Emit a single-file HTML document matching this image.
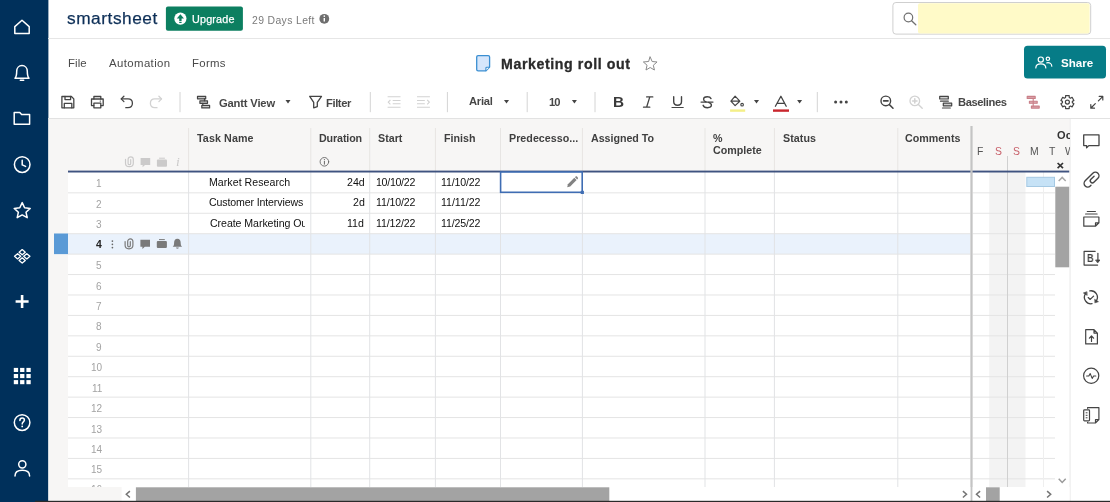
<!DOCTYPE html>
<html><head><meta charset="utf-8"><title>Marketing roll out - Smartsheet</title>
<style>
*{box-sizing:border-box;margin:0;padding:0}
html,body{width:1110px;height:502px;overflow:hidden;background:#fff;font-family:"Liberation Sans",sans-serif;}
.abs{position:absolute}
.t{position:absolute;white-space:nowrap;line-height:1;will-change:transform}
svg{position:absolute;left:0;top:0;overflow:visible}
</style></head><body>

<svg width="1110" height="502" viewBox="0 0 1110 502"><rect x="0.00" y="0.00" width="48.40" height="502.00" fill="#00305b"/><rect x="48.00" y="38.00" width="1062.00" height="1.00" fill="#e6e6e6"/><rect x="165.90" y="6.60" width="77.00" height="24.20" fill="#0c7f60" rx="2"/><rect x="892.90" y="2.50" width="197.80" height="31.60" fill="#fff" rx="3" stroke="#cfcfcf" stroke-width="1.0"/><rect x="918.00" y="3.20" width="171.60" height="30.20" fill="#fffac8" rx="2"/><rect x="1024.00" y="45.70" width="82.00" height="32.80" fill="#067c87" rx="3.5"/><rect x="48.00" y="118.00" width="1062.00" height="1.00" fill="#e2e2e2"/><rect x="48.40" y="119.00" width="1021.20" height="383.00" fill="#f7f6f5"/><rect x="68.00" y="172.00" width="902.40" height="315.00" fill="#fff"/><rect x="68.00" y="233.89" width="902.40" height="20.03" fill="#eaf2fc"/><rect x="54.00" y="233.49" width="14.00" height="20.63" fill="#5a9ad6"/><rect x="972.60" y="172.00" width="82.40" height="315.00" fill="#fff"/><rect x="989.20" y="172.00" width="36.30" height="315.00" fill="#f3f3f3"/><rect x="1055.00" y="172.00" width="14.50" height="315.00" fill="#fff"/><rect x="68.00" y="192.33" width="902.40" height="1.00" fill="#e4e4e4"/><rect x="972.60" y="192.33" width="82.40" height="1.00" fill="#e4e4e4"/><rect x="68.00" y="212.76" width="902.40" height="1.00" fill="#e4e4e4"/><rect x="972.60" y="212.76" width="82.40" height="1.00" fill="#e4e4e4"/><rect x="68.00" y="233.19" width="902.40" height="1.00" fill="#e4e4e4"/><rect x="972.60" y="233.19" width="82.40" height="1.00" fill="#e4e4e4"/><rect x="68.00" y="253.62" width="902.40" height="1.00" fill="#e4e4e4"/><rect x="972.60" y="253.62" width="82.40" height="1.00" fill="#e4e4e4"/><rect x="68.00" y="274.05" width="902.40" height="1.00" fill="#e4e4e4"/><rect x="972.60" y="274.05" width="82.40" height="1.00" fill="#e4e4e4"/><rect x="68.00" y="294.48" width="902.40" height="1.00" fill="#e4e4e4"/><rect x="972.60" y="294.48" width="82.40" height="1.00" fill="#e4e4e4"/><rect x="68.00" y="314.91" width="902.40" height="1.00" fill="#e4e4e4"/><rect x="972.60" y="314.91" width="82.40" height="1.00" fill="#e4e4e4"/><rect x="68.00" y="335.34" width="902.40" height="1.00" fill="#e4e4e4"/><rect x="972.60" y="335.34" width="82.40" height="1.00" fill="#e4e4e4"/><rect x="68.00" y="355.77" width="902.40" height="1.00" fill="#e4e4e4"/><rect x="972.60" y="355.77" width="82.40" height="1.00" fill="#e4e4e4"/><rect x="68.00" y="376.20" width="902.40" height="1.00" fill="#e4e4e4"/><rect x="972.60" y="376.20" width="82.40" height="1.00" fill="#e4e4e4"/><rect x="68.00" y="396.63" width="902.40" height="1.00" fill="#e4e4e4"/><rect x="972.60" y="396.63" width="82.40" height="1.00" fill="#e4e4e4"/><rect x="68.00" y="417.06" width="902.40" height="1.00" fill="#e4e4e4"/><rect x="972.60" y="417.06" width="82.40" height="1.00" fill="#e4e4e4"/><rect x="68.00" y="437.49" width="902.40" height="1.00" fill="#e4e4e4"/><rect x="972.60" y="437.49" width="82.40" height="1.00" fill="#e4e4e4"/><rect x="68.00" y="457.92" width="902.40" height="1.00" fill="#e4e4e4"/><rect x="972.60" y="457.92" width="82.40" height="1.00" fill="#e4e4e4"/><rect x="68.00" y="478.35" width="902.40" height="1.00" fill="#e4e4e4"/><rect x="972.60" y="478.35" width="82.40" height="1.00" fill="#e4e4e4"/><rect x="188.10" y="128.00" width="1.00" height="43.00" fill="#e7e5e3"/><rect x="188.10" y="172.00" width="1.00" height="315.00" fill="#e2e3e5"/><rect x="310.30" y="128.00" width="1.00" height="43.00" fill="#e7e5e3"/><rect x="310.30" y="172.00" width="1.00" height="315.00" fill="#e2e3e5"/><rect x="369.20" y="128.00" width="1.00" height="43.00" fill="#e7e5e3"/><rect x="369.20" y="172.00" width="1.00" height="315.00" fill="#e2e3e5"/><rect x="434.90" y="128.00" width="1.00" height="43.00" fill="#e7e5e3"/><rect x="434.90" y="172.00" width="1.00" height="315.00" fill="#e2e3e5"/><rect x="500.00" y="128.00" width="1.00" height="43.00" fill="#e7e5e3"/><rect x="500.00" y="172.00" width="1.00" height="315.00" fill="#e2e3e5"/><rect x="581.90" y="128.00" width="1.00" height="43.00" fill="#e7e5e3"/><rect x="581.90" y="172.00" width="1.00" height="315.00" fill="#e2e3e5"/><rect x="704.50" y="128.00" width="1.00" height="43.00" fill="#e7e5e3"/><rect x="704.50" y="172.00" width="1.00" height="315.00" fill="#e2e3e5"/><rect x="773.90" y="128.00" width="1.00" height="43.00" fill="#e7e5e3"/><rect x="773.90" y="172.00" width="1.00" height="315.00" fill="#e2e3e5"/><rect x="897.30" y="128.00" width="1.00" height="43.00" fill="#e7e5e3"/><rect x="897.30" y="172.00" width="1.00" height="315.00" fill="#e2e3e5"/><rect x="1007.00" y="156.00" width="1.00" height="331.00" fill="#d0d0d0"/><rect x="1043.00" y="172.00" width="1.00" height="315.00" fill="#efefef"/><rect x="68.00" y="170.60" width="1001.60" height="1.90" fill="#3f5380"/><rect x="500.60" y="172.00" width="81.60" height="20.30" fill="#fff" stroke="#3f6db3" stroke-width="1.6"/><rect x="580.70" y="190.80" width="3.20" height="3.20" fill="#3f6db3"/><rect x="1026.80" y="177.30" width="27.70" height="9.20" fill="#c6e2f6" stroke="#a5c9e3" stroke-width="1.0"/><rect x="970.40" y="126.00" width="2.20" height="376.00" fill="#c4c4c4"/><rect x="1055.30" y="186.70" width="14.20" height="80.60" fill="#a3a3a3"/><rect x="1069.60" y="119.00" width="40.40" height="383.00" fill="#fff"/><rect x="1069.60" y="119.00" width="1.0" height="383.00" fill="#e9e9e9"/><rect x="121.60" y="487.00" width="848.80" height="14.00" fill="#fff"/><rect x="972.60" y="487.00" width="97.00" height="14.00" fill="#fff"/><rect x="135.90" y="487.30" width="473.40" height="13.70" fill="#a3a3a3"/><rect x="986.00" y="487.30" width="13.70" height="13.70" fill="#a3a3a3"/><rect x="35.00" y="500.80" width="1075.00" height="1.20" fill="#2a2a2a"/></svg>
<svg class="abs" style="left:0;top:0" width="48" height="502" viewBox="0 0 48 502" fill="none" stroke="#fff" stroke-width="1.5" stroke-linejoin="round" stroke-linecap="round"><path d="M14.8 26.6 L22 20.2 L29.2 26.6 V33.6 H14.8 Z"/><path d="M15 78.2 H29 C27.4 76.6 27.3 75 27.3 71.3 C27.3 68 25 65.6 22 65.6 C19 65.6 16.700 68 16.700 71.300 C16.700 75 16.600 76.600 15 78.200 Z"/><path d="M20.300 80.300 H23.700"/><path d="M14.2 112.400 H19.800 L21.600 114.400 H29.600 V124.200 H14.200 Z"/><circle cx="22.2" cy="164.600" r="7.800"/><path d="M22.200 160.200 V164.900 L25.600 166.400"/><path d="M22.2 202.600 L24.600 207.800 L30.200 208.400 L26 212.200 L27.200 217.700 L22.200 214.900 L17.200 217.700 L18.400 212.200 L14.200 208.400 L19.800 207.800 Z"/><path stroke-width="1.3" d="M22.2 249.6 L25.3 252.2 L22.2 254.79999999999998 L19.099999999999998 252.2 Z"/><path stroke-width="1.3" d="M17.6 253.70000000000002 L20.700000000000003 256.3 L17.6 258.90000000000003 L14.500000000000002 256.3 Z"/><path stroke-width="1.3" d="M26.8 253.70000000000002 L29.900000000000002 256.3 L26.8 258.90000000000003 L23.7 256.3 Z"/><path stroke-width="1.3" d="M22.2 257.79999999999995 L25.3 260.4 L22.2 263.0 L19.099999999999998 260.4 Z"/><path stroke-width="2.6" stroke-linecap="butt" d="M22.100 295 V308 M15.600 301.500 H28.600"/><rect x="13.80" y="367.90" width="4.300" height="4.100" fill="#fff" stroke="none"/><rect x="20.10" y="367.90" width="4.300" height="4.100" fill="#fff" stroke="none"/><rect x="26.40" y="367.90" width="4.300" height="4.100" fill="#fff" stroke="none"/><rect x="13.80" y="374.00" width="4.300" height="4.100" fill="#fff" stroke="none"/><rect x="20.10" y="374.00" width="4.300" height="4.100" fill="#fff" stroke="none"/><rect x="26.40" y="374.00" width="4.300" height="4.100" fill="#fff" stroke="none"/><rect x="13.80" y="380.10" width="4.300" height="4.100" fill="#fff" stroke="none"/><rect x="20.10" y="380.10" width="4.300" height="4.100" fill="#fff" stroke="none"/><rect x="26.40" y="380.10" width="4.300" height="4.100" fill="#fff" stroke="none"/><circle cx="22.1" cy="422.600" r="7.800"/><path stroke-width="1.5" d="M19.900 420.400 C19.900 418.900 20.900 418.100 22.200 418.100 C23.500 418.100 24.400 418.900 24.400 420.100 C24.400 421.900 22.200 421.900 22.200 423.900"/><circle cx="22.200" cy="426.400" r="0.900" fill="#fff" stroke="none"/><circle cx="22.3" cy="464.300" r="3.600"/><path d="M15 476 C15 472.200 18 470.300 22.300 470.300 C26.600 470.300 29.600 472.200 29.600 476"/></svg>
<div class="t" style="left:67.40px;top:10.26px;font-size:17.3px;color:#0d2f57;letter-spacing:0.536px;-webkit-text-stroke:0.25px #0d2f57;">smartsheet</div>
<div class="t" style="left:191.80px;top:13.66px;font-size:10.8px;color:#fff;letter-spacing:0.178px;-webkit-text-stroke:0.25px #fff;">Upgrade</div>
<div class="t" style="left:251.80px;top:16.40px;font-size:10.4px;color:#7a7a7a;letter-spacing:0.374px;">29 Days Left</div>
<div class="t" style="left:68.40px;top:58.25px;font-size:11.4px;color:#4a4a4a;letter-spacing:0.077px;">File</div>
<div class="t" style="left:109.30px;top:58.25px;font-size:11.4px;color:#4a4a4a;letter-spacing:0.392px;">Automation</div>
<div class="t" style="left:191.90px;top:58.25px;font-size:11.4px;color:#4a4a4a;letter-spacing:0.301px;">Forms</div>
<div class="t" style="left:501.30px;top:56.78px;font-size:14.2px;color:#2b2b2b;font-weight:bold;letter-spacing:0.592px;-webkit-text-stroke:0.3px #2b2b2b;">Marketing roll out</div>
<div class="t" style="left:1060.70px;top:57.08px;font-size:11.6px;color:#fff;font-weight:bold;letter-spacing:0.015px;">Share</div>
<div class="t" style="left:218.60px;top:97.62px;font-size:11.2px;color:#474747;font-weight:bold;letter-spacing:-0.164px;">Gantt View</div>
<div class="t" style="left:325.60px;top:97.62px;font-size:11.2px;color:#474747;font-weight:bold;letter-spacing:-0.397px;">Filter</div>
<div class="t" style="left:469.40px;top:96.42px;font-size:11.2px;color:#474747;font-weight:bold;letter-spacing:-0.250px;">Arial</div>
<div class="t" style="left:549.40px;top:97.02px;font-size:11.2px;color:#474747;font-weight:bold;letter-spacing:-0.858px;">10</div>
<div class="t" style="left:957.80px;top:96.92px;font-size:11.2px;color:#474747;font-weight:bold;letter-spacing:-0.412px;">Baselines</div>
<div class="t" style="left:613.30px;top:94.25px;font-size:15.3px;color:#3a3a3a;font-weight:bold;">B</div>
<div class="t" style="left:196.60px;top:132.84px;font-size:10.7px;color:#404040;font-weight:bold;letter-spacing:0.111px;">Task Name</div>
<div class="t" style="left:319.30px;top:132.84px;font-size:10.7px;color:#404040;font-weight:bold;letter-spacing:-0.112px;">Duration</div>
<div class="t" style="left:378.20px;top:132.84px;font-size:10.7px;color:#404040;font-weight:bold;">Start</div>
<div class="t" style="left:443.60px;top:132.84px;font-size:10.7px;color:#404040;font-weight:bold;">Finish</div>
<div class="t" style="left:508.60px;top:132.84px;font-size:10.7px;color:#404040;font-weight:bold;letter-spacing:0.033px;">Predecesso...</div>
<div class="t" style="left:590.60px;top:132.84px;font-size:10.7px;color:#404040;font-weight:bold;letter-spacing:-0.031px;">Assigned To</div>
<div class="t" style="left:713.20px;top:132.84px;font-size:10.7px;color:#404040;font-weight:bold;">%</div>
<div class="t" style="left:713.20px;top:144.54px;font-size:10.7px;color:#404040;font-weight:bold;">Complete</div>
<div class="t" style="left:782.50px;top:132.84px;font-size:10.7px;color:#404040;font-weight:bold;letter-spacing:0.060px;">Status</div>
<div class="t" style="left:905.00px;top:132.84px;font-size:10.7px;color:#404040;font-weight:bold;letter-spacing:0.029px;">Comments</div>
<div class="t" style="left:977.22px;top:147.10px;font-size:10.4px;color:#555;">F</div>
<div class="t" style="left:994.63px;top:147.10px;font-size:10.4px;color:#c8606a;">S</div>
<div class="t" style="left:1012.53px;top:147.10px;font-size:10.4px;color:#c8606a;">S</div>
<div class="t" style="left:1029.97px;top:147.10px;font-size:10.4px;color:#555;">M</div>
<div class="t" style="left:1049.22px;top:147.10px;font-size:10.4px;color:#555;">T</div>
<div class="abs" style="left:1056px;top:125px;width:13.5px;height:47px;overflow:hidden">
<div class="t" style="left:1px;top:5.39px;font-size:11px;font-weight:bold;color:#333;letter-spacing:0.3px">Oct</div>
<div class="t" style="left:9.4px;top:22.10px;font-size:10.4px;color:#555">W</div>
</div>
<div class="t" style="left:176.3px;top:154.6px;font-size:13.5px;font-style:italic;font-family:'Liberation Serif',serif;color:#cbcaca">i</div>
<div class="t" style="left:96.34px;top:179.44px;font-size:10px;color:#a3a3a3;">1</div>
<div class="t" style="left:96.34px;top:199.87px;font-size:10px;color:#a3a3a3;">2</div>
<div class="t" style="left:96.34px;top:220.30px;font-size:10px;color:#a3a3a3;">3</div>
<div class="t" style="left:96.32px;top:239.99px;font-size:10.4px;color:#222;font-weight:bold;">4</div>
<div class="t" style="left:96.34px;top:261.16px;font-size:10px;color:#a3a3a3;">5</div>
<div class="t" style="left:96.34px;top:281.58px;font-size:10px;color:#a3a3a3;">6</div>
<div class="t" style="left:96.34px;top:302.01px;font-size:10px;color:#a3a3a3;">7</div>
<div class="t" style="left:96.34px;top:322.44px;font-size:10px;color:#a3a3a3;">8</div>
<div class="t" style="left:96.34px;top:342.88px;font-size:10px;color:#a3a3a3;">9</div>
<div class="t" style="left:90.78px;top:363.31px;font-size:10px;color:#a3a3a3;">10</div>
<div class="t" style="left:91.52px;top:383.74px;font-size:10px;color:#a3a3a3;">11</div>
<div class="t" style="left:90.78px;top:404.17px;font-size:10px;color:#a3a3a3;">12</div>
<div class="t" style="left:90.78px;top:424.59px;font-size:10px;color:#a3a3a3;">13</div>
<div class="t" style="left:90.78px;top:445.02px;font-size:10px;color:#a3a3a3;">14</div>
<div class="t" style="left:90.78px;top:465.45px;font-size:10px;color:#a3a3a3;">15</div>
<div class="abs" style="left:84px;top:480px;width:30px;height:7px;overflow:hidden">
<div class="t" style="left:6.8px;top:5.29px;font-size:10px;color:#a3a3a3">16</div>
</div>
<div class="t" style="left:208.90px;top:176.73px;font-size:10.6px;color:#111;letter-spacing:0.042px;">Market Research</div>
<div class="t" style="left:346.61px;top:176.73px;font-size:10.6px;color:#111;">24d</div>
<div class="t" style="left:376.20px;top:176.73px;font-size:10.6px;color:#111;letter-spacing:-0.280px;">10/10/22</div>
<div class="t" style="left:441.40px;top:176.73px;font-size:10.6px;color:#111;letter-spacing:-0.154px;">11/10/22</div>
<div class="t" style="left:209.30px;top:197.16px;font-size:10.6px;color:#111;letter-spacing:-0.128px;">Customer Interviews</div>
<div class="t" style="left:352.51px;top:197.16px;font-size:10.6px;color:#111;">2d</div>
<div class="t" style="left:376.20px;top:197.16px;font-size:10.6px;color:#111;letter-spacing:-0.168px;">11/10/22</div>
<div class="t" style="left:441.40px;top:197.16px;font-size:10.6px;color:#111;letter-spacing:-0.041px;">11/11/22</div>
<div class="abs" style="left:209px;top:214.56px;width:96.4px;height:18px;overflow:hidden">
<div class="t" style="left:0.5px;top:3.03px;font-size:10.6px;color:#111;letter-spacing:-0.060px">Create Marketing Outline</div>
</div>
<div class="t" style="left:347.40px;top:217.59px;font-size:10.6px;color:#111;">11d</div>
<div class="t" style="left:376.20px;top:217.59px;font-size:10.6px;color:#111;letter-spacing:-0.168px;">11/12/22</div>
<div class="t" style="left:441.40px;top:217.59px;font-size:10.6px;color:#111;letter-spacing:-0.154px;">11/25/22</div>
<svg width="1110" height="502" viewBox="0 0 1110 502" fill="none" stroke="#444" stroke-width="1.3" stroke-linejoin="round" stroke-linecap="round"><path d="M61.9 96.500 H71.400 L73.800 98.900 V107.800 H61.900 Z"/><path d="M65 96.500 V99.600 H70.600 V96.500"/><path d="M64.300 107.800 V103.300 H71.800 V107.800"/><path d="M93.900 99 V96.500 H100.800 V99"/><path d="M93.800 105.600 H91.500 V99 H103.200 V105.600 H100.900"/><path d="M93.900 103.200 H100.800 V107.800 H93.900 Z"/><circle cx="100.300" cy="101.100" r="0.700" fill="#444" stroke="none"/><path d="M123.900 96.200 L121.200 98.900 L123.900 101.600"/><path d="M121.400 98.900 H128 C131 98.900 132.400 101 132.400 103.300 C132.400 105.700 130.700 107.700 128 107.700 H125.800"/><g stroke="#d2d2d2"><path d="M158.900 96.200 L161.600 98.900 L158.900 101.600"/><path d="M161.400 98.900 H154.800 C151.800 98.900 150.400 101 150.400 103.300 C150.400 105.700 152.100 107.700 154.800 107.700 H157"/></g><path d="M180 92 V112.200" stroke="#d4d4d4" stroke-width="1" stroke-linecap="butt"/><path d="M370.3 92 V112.200" stroke="#d4d4d4" stroke-width="1" stroke-linecap="butt"/><path d="M447.4 92 V112.200" stroke="#d4d4d4" stroke-width="1" stroke-linecap="butt"/><path d="M527.2 92 V112.200" stroke="#d4d4d4" stroke-width="1" stroke-linecap="butt"/><path d="M595 92 V112.200" stroke="#d4d4d4" stroke-width="1" stroke-linecap="butt"/><path d="M817.3 92 V112.200" stroke="#d4d4d4" stroke-width="1" stroke-linecap="butt"/><g stroke-width="1.2" fill="#c9c9c9"><rect x="197.500" y="96.300" width="8.200" height="2.500"/><rect x="199.900" y="100.800" width="7.600" height="2.500"/><rect x="201.800" y="105.400" width="7.800" height="2.500"/></g><path d="M204.500 98.700 V100.800 M202.800 103.300 V105.500" stroke-width="1.200"/><path d="M285.50 100.10 H290.50 L288.00 103.50 Z" fill="#444" stroke="none"/><path d="M309.700 96.400 H321.500 L317.300 102.400 V106.600 L313.700 107.800 V102.400 Z"/><g stroke="#d2d2d2" stroke-linecap="butt" stroke-width="1.100"><path d="M387.600 96.800 H400.500 M387.600 107.300 H400.500 M392.700 100.500 H400.500 M392.700 103.800 H400.500"/><path d="M390.400 100 L388.200 102.150 L390.400 104.300"/><path d="M417 96.800 H429.900 M417 107.300 H429.900 M417 100.500 H424.800 M417 103.800 H424.800"/><path d="M427.200 100 L429.400 102.150 L427.200 104.300"/></g><path d="M504.00 100.00 H509.00 L506.50 103.40 Z" fill="#444" stroke="none"/><path d="M571.90 100.00 H576.90 L574.40 103.40 Z" fill="#444" stroke="none"/><path d="M646.600 96.900 H652.800 M643.500 107.200 H649.800 M649.800 96.900 L646.600 107.200" stroke-width="1.300"/><path d="M673.700 96.700 V101.600 C673.700 104.200 675.300 105.300 677.600 105.300 C679.900 105.300 681.500 104.200 681.500 101.600 V96.700" stroke-width="1.400"/><path d="M672 107.500 H683.200" stroke-width="1.200"/><path d="M711 98.600 C710.400 97.200 709 96.700 707.300 96.700 C705.100 96.700 703.600 97.700 703.600 99.300 C703.600 100.600 704.500 101.400 706 101.900 M708.600 102.400 C710.300 103 711.400 103.700 711.400 105.100 C711.400 106.700 709.700 107.700 707.400 107.700 C705.200 107.700 703.600 106.900 703.100 105.300" stroke-width="1.400"/><path d="M701 102.100 H713" stroke-width="1.100"/><path d="M735.100 96.200 L730.900 101.200 L735.100 105.600 L739.800 101.200 Z M730.900 101.200 H739.800" stroke-width="1.200"/><circle cx="742.100" cy="104.700" r="1.300" stroke-width="1.100"/><rect x="730.100" y="109.400" width="15.100" height="2.400" fill="#f4ef88" stroke="none"/><path d="M754.00 100.00 H759.00 L756.50 103.40 Z" fill="#444" stroke="none"/><path d="M775.400 106.200 L780.900 96.300 L786.200 106.200 M777.200 103.300 H784.500" stroke-width="1.300"/><rect x="773" y="109.400" width="16" height="2.400" fill="#c9262d" stroke="none"/><path d="M797.10 100.00 H802.10 L799.60 103.40 Z" fill="#444" stroke="none"/><circle cx="835.6" cy="102.100" r="1.500" fill="#444" stroke="none"/><circle cx="841" cy="102.100" r="1.500" fill="#444" stroke="none"/><circle cx="846.3" cy="102.100" r="1.500" fill="#444" stroke="none"/><circle cx="885.800" cy="100.900" r="4.800" stroke-width="1.400"/><path d="M889.400 104.600 L893 108.200" stroke-width="1.500"/><path d="M883.600 100.900 H888" stroke-width="1.600"/><g stroke="#d2d2d2"><circle cx="914.800" cy="100.900" r="4.800" stroke-width="1.300"/><path d="M918.400 104.600 L922.200 108.200" stroke-width="1.400"/><path d="M912.600 100.900 H917 M914.800 98.700 V103.100" stroke-width="1.500"/></g><g stroke-width="1.200"><rect x="939.700" y="96.400" width="8.600" height="2.600" fill="#cfcfcf"/><path d="M940.500 101.200 H948.300"/><rect x="943.300" y="103.200" width="8.400" height="2.600" fill="#cfcfcf"/><path d="M942.500 108 H950.300"/></g><g stroke="#c97f88" fill="#dcaab0" stroke-width="1.100"><rect x="1027.200" y="96.400" width="8" height="2"/><rect x="1029.400" y="101.300" width="7.800" height="2"/><rect x="1031.400" y="106.100" width="7.800" height="2"/><path d="M1033.200 98.500 V106"/></g><path d="M1065.56 97.45 L1065.60 95.65 L1069.20 95.65 L1069.24 97.45 L1070.51 98.18 L1072.09 97.31 L1073.89 100.43 L1072.35 101.37 L1072.35 102.83 L1073.89 103.77 L1072.09 106.89 L1070.51 106.02 L1069.24 106.75 L1069.20 108.55 L1065.60 108.55 L1065.56 106.75 L1064.29 106.02 L1062.71 106.89 L1060.91 103.77 L1062.45 102.83 L1062.45 101.37 L1060.91 100.43 L1062.71 97.31 L1064.29 98.18 Z" stroke-width="1.200" stroke-linejoin="round"/><circle cx="1067.400" cy="102.100" r="2" stroke-width="1.200"/><path d="M1098.400 100.900 L1102.600 96.600 M1099.200 96.400 H1102.800 V100 M1095.300 103.700 L1091 108 M1090.800 104.500 V108.200 H1094.500" stroke-width="1.200"/><path d="M478.100 55.600 H488.200 C489 55.600 489.600 56.200 489.600 57 V67 L486 70.800 H478.100 C477.300 70.800 476.700 70.200 476.700 69.400 V57 C476.700 56.200 477.300 55.600 478.100 55.600 Z" fill="#d6e6fb" stroke="#3b8fd2" stroke-width="1.300"/><path d="M489.400 67.200 H486.800 C486.200 67.200 485.900 67.500 485.900 68.100 V70.600" fill="#fff" stroke="#3b8fd2" stroke-width="1.100"/><path d="M650.20 57.00 L652.14 61.53 L657.05 61.98 L653.34 65.22 L654.43 70.02 L650.20 67.50 L645.97 70.02 L647.06 65.22 L643.35 61.98 L648.26 61.53 Z" stroke="#8a8a8a" stroke-width="1"/><circle cx="908.400" cy="17.500" r="4.300" stroke="#707070" stroke-width="1.200"/><path d="M911.600 20.800 L915.800 24.800" stroke="#707070" stroke-width="1.300"/><circle cx="180.400" cy="18.600" r="6.100" fill="#fff" stroke="none"/><path d="M180.400 14.300 L184 18.500 H181.600 V21 H179.200 V18.500 H176.800 Z" fill="#0c7f60" stroke="none"/><rect x="179.200" y="21.800" width="2.400" height="1.200" fill="#0c7f60" stroke="none"/><circle cx="324.300" cy="18.800" r="4.900" fill="#6e6e6e" stroke="none"/><path d="M324.300 18.100 V21.600" stroke="#fff" stroke-width="1.400" stroke-linecap="butt"/><circle cx="324.300" cy="16.100" r="0.850" fill="#fff" stroke="none"/><g stroke="#fff" stroke-width="1.200"><circle cx="1040.800" cy="59.600" r="2.600"/><path d="M1035.800 68 C1035.800 65 1037.800 63.800 1040.800 63.800 C1043.800 63.800 1045.800 65 1045.800 68"/><circle cx="1047.900" cy="58.800" r="1.700"/><path d="M1046.800 62.800 C1049.800 62.300 1051.800 63.700 1051.800 66.200"/></g></svg>
<svg width="1110" height="502" viewBox="0 0 1110 502" fill="none" stroke="#444" stroke-width="1.3" stroke-linejoin="round" stroke-linecap="round"><path d="M1083.700 134.900 H1099 V145.600 H1088.800 L1086.600 147.700 V145.600 H1083.700 Z"/><g transform="translate(1091.400 179.700) rotate(45)"><path d="M3.600 4.200 V5.200 A3.600 3.600 0 0 1 -3.600 5.200 V-5.600 A3.600 3.600 0 0 1 3.600 -5.600 V0.100 A2.100 2.100 0 0 1 -0.600 0.100 V-4.400" stroke-width="1.400"/></g><path d="M1087.300 211.500 H1095.400 M1085.600 214 H1097.100" stroke-width="1.200"/><path d="M1083.800 217 H1098.900 V222.800 L1095.400 226.200 H1083.800 Z M1098.800 222.900 H1095.500 V226.100" stroke-width="1.200"/><path d="M1095.200 251.300 H1084.100 V265.100 H1097.600" stroke-width="1.200"/><path d="M1097.900 253.400 V261.600" stroke-width="1.200"/><path d="M1095.900 260 H1099.900 L1097.900 262.600 Z" fill="#444" stroke-width="0.800"/><path d="M1089.77 290.90 A6.5 6.5 0 0 1 1096.41 300.74" stroke-width="1.300"/><path d="M1095.14 302.78 L1098.44 301.66 L1094.88 299.43 Z" fill="#444" stroke-width="0.600"/><path d="M1092.03 303.70 A6.5 6.5 0 0 1 1085.39 293.86" stroke-width="1.300"/><path d="M1086.66 291.82 L1083.36 292.94 L1086.92 295.17 Z" fill="#444" stroke-width="0.600"/><path d="M1088.20 297.60 L1090.20 299.40 L1093.60 296.10" stroke-width="1.300"/><path d="M1085.700 329.700 H1094 L1097.400 333.100 V343.900 H1085.700 Z M1094 329.900 V333.100 H1097.200" stroke-width="1.200"/><path d="M1091.500 341.400 V336.200 M1089.400 338.200 L1091.500 336 L1093.600 338.200" stroke-width="1.200"/><circle cx="1091.200" cy="375.800" r="7.600" stroke-width="1.200"/><path d="M1086.600 376 H1088.800 L1090.200 373.600 L1092.200 378.400 L1093.600 376 H1095.800" stroke-width="1.100"/><path d="M1087.600 408.300 V407.600 H1098.900 V419.600 L1095.400 423 H1087.600 V422.300 M1098.800 419.700 H1095.500 V422.900" stroke-width="1.200"/><rect x="1083.700" y="409.800" width="5.800" height="11" rx="0.800" stroke-width="1.200" fill="#fff"/><path d="M1085.700 412.800 H1087.500 M1085.700 415.300 H1087.500 M1085.700 417.800 H1087.500" stroke-width="1" stroke-linecap="butt"/></svg>
<div class="t" style="left:1086.80px;top:253.15px;font-size:11.4px;color:#444;font-weight:bold;transform:scaleX(0.8);transform-origin:0 0;">B</div>
<svg width="1110" height="502" viewBox="0 0 1110 502" fill="none" stroke-linejoin="round" stroke-linecap="round"><g transform="translate(124.80 156.20)" stroke="#cbcaca" stroke-width="1.2" fill="none"><path d="M0.7 3.2 V7 C0.700 9.200 2.400 10.500 4.600 10.500 C6.800 10.500 8.500 9.200 8.500 7 V3.200 C8.500 1.600 7.500 0.600 6 0.600 C4.500 0.600 3.300 1.600 3.300 3.200 V7.200 C3.300 8 3.900 8.500 4.600 8.500 C5.300 8.500 5.900 8 5.900 7.200 V3.400"/></g><path d="M140.60 157.90 h9.600 v7 h-5.200 l-2.400 2.300 v-2.300 h-2 Z" fill="#cbcaca" stroke="none"/><path d="M159.10 157.70 h5.800 v1 h-5.800 Z" fill="#cbcaca" stroke="none"/><rect x="156.90" y="159.50" width="10.100" height="7.200" rx="1" fill="#cbcaca" stroke="none"/><g transform="translate(124.40 238.30)" stroke="#7a7a7a" stroke-width="1.2" fill="none"><path d="M0.7 3.2 V7 C0.700 9.200 2.400 10.500 4.600 10.500 C6.800 10.500 8.500 9.200 8.500 7 V3.200 C8.500 1.600 7.500 0.600 6 0.600 C4.500 0.600 3.300 1.600 3.300 3.200 V7.200 C3.300 8 3.900 8.500 4.600 8.500 C5.300 8.500 5.900 8 5.900 7.200 V3.400"/></g><path d="M140.40 239.70 h9.600 v7 h-5.200 l-2.400 2.300 v-2.300 h-2 Z" fill="#7a7a7a" stroke="none"/><path d="M159.00 239.10 h5.800 v1 h-5.800 Z" fill="#7a7a7a" stroke="none"/><rect x="156.80" y="240.90" width="10.100" height="7.200" rx="1" fill="#7a7a7a" stroke="none"/><path d="M177.40 238.80 c2.400 0 3.300 1.900 3.300 3.900 c0 2 0.300 3 1.400 4 h-9.400 c1.100 -1 1.400 -2 1.400 -4 c0 -2 0.900 -3.900 3.300 -3.900 Z" fill="#7a7a7a" stroke="none"/><path d="M176.10 247.40 h2.600 v0.400 c0 0.500 -0.500 0.900 -1.300 0.900 c-0.800 0 -1.300 -0.400 -1.300 -0.900 Z" fill="#7a7a7a" stroke="none"/><circle cx="112.400" cy="241.1" r="0.850" fill="#666" stroke="none"/><circle cx="112.400" cy="244.35" r="0.850" fill="#666" stroke="none"/><circle cx="112.400" cy="247.6" r="0.850" fill="#666" stroke="none"/><circle cx="324.400" cy="161.800" r="4.300" stroke="#666" stroke-width="0.900"/><path d="M324.400 161.200 V164.200" stroke="#666" stroke-width="1"/><circle cx="324.400" cy="159.500" r="0.600" fill="#666" stroke="none"/><path d="M567.200 187.200 L567.900 184.200 L574.300 177.800 L576.600 180.100 L570.200 186.500 Z" fill="#828282" stroke="none"/><path d="M575 177.200 L575.600 176.600 C576 176.200 576.600 176.200 577 176.600 L577.800 177.400 C578.200 177.800 578.200 178.400 577.800 178.800 L577.200 179.400 Z" fill="#828282" stroke="none"/><path d="M129.90 491.10 L126.30 494.30 L129.90 497.50" stroke="#747474" stroke-width="1.5" fill="none" stroke-linecap="butt" stroke-linejoin="miter"/><path d="M962.90 491.10 L966.50 494.30 L962.90 497.50" stroke="#747474" stroke-width="1.5" fill="none" stroke-linecap="butt" stroke-linejoin="miter"/><path d="M980.10 491.10 L976.50 494.30 L980.10 497.50" stroke="#747474" stroke-width="1.5" fill="none" stroke-linecap="butt" stroke-linejoin="miter"/><path d="M1047.10 491.10 L1050.70 494.30 L1047.10 497.50" stroke="#747474" stroke-width="1.5" fill="none" stroke-linecap="butt" stroke-linejoin="miter"/><path d="M1058.70 181.00 L1062.20 177.40 L1065.70 181.00" stroke="#a8a8a8" stroke-width="1.5" fill="none" stroke-linecap="butt" stroke-linejoin="miter"/><path d="M1058.70 478.80 L1062.20 482.40 L1065.70 478.80" stroke="#9a9a9a" stroke-width="1.5" fill="none" stroke-linecap="butt" stroke-linejoin="miter"/><path d="M1057.600 163 L1063 168.200 M1063 163 L1057.600 168.200" stroke="#333" stroke-width="1.700" stroke-linecap="butt"/></svg>
</body></html>
